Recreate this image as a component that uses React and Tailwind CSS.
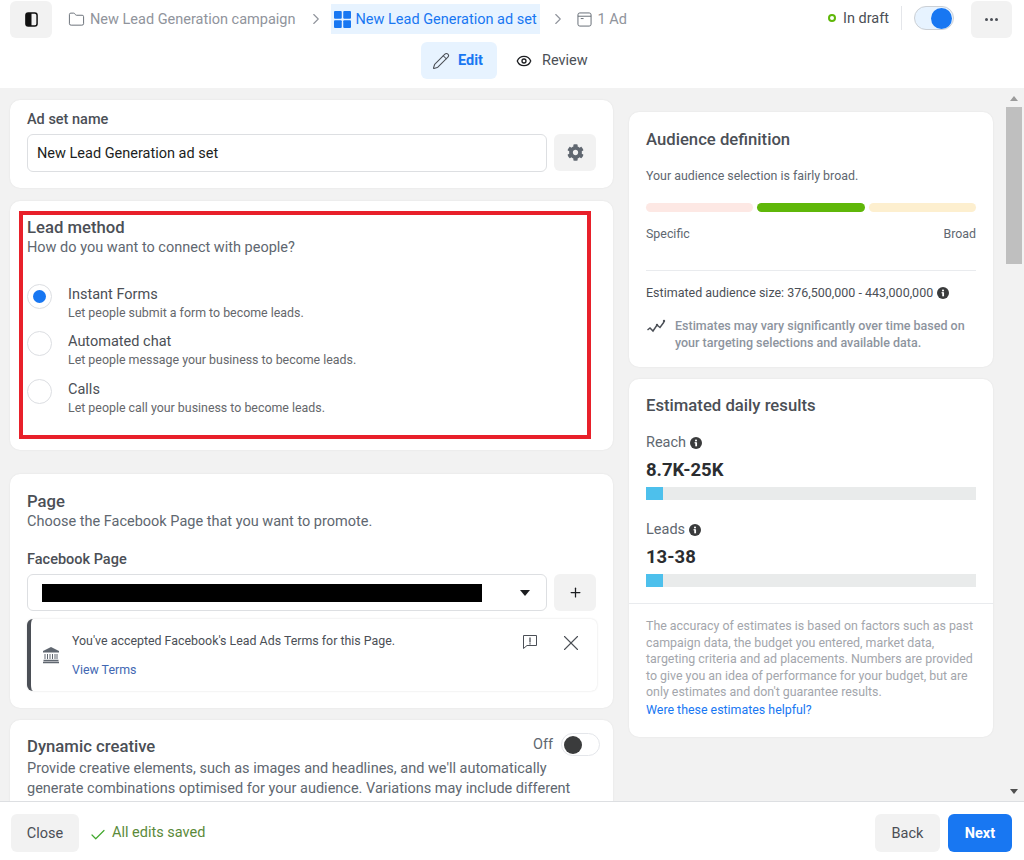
import React from "react";
import { ChevronRight, Pencil, Eye, Plus, X, Check, Folder } from "lucide-react";
import { FaCog } from "react-icons/fa";

function Info({ className = "" }) {
  return (
    <svg viewBox="0 0 16 16" className={"w-[12px] h-[12px] " + className}>
      <circle cx="8" cy="8" r="8" fill="#3a3b3c" />
      <rect x="7" y="7" width="2.4" height="5.4" fill="#fff" />
      <rect x="6" y="7" width="2" height="1.4" fill="#fff" />
      <circle cx="8" cy="4.6" r="1.4" fill="#fff" />
    </svg>
  );
}

function Card({ className = "", children }) {
  return <div className={"bg-white rounded-[10px] shadow-[0_0_2px_rgba(0,0,0,0.08)] " + className}>{children}</div>;
}

function Radio({ selected, title, desc, className = "" }) {
  return (
    <div className={"flex " + className}>
      <div className="w-[25px] h-[25px] -mt-[1px] rounded-full border border-[#dcdee2] bg-white flex items-center justify-center shrink-0">
        {selected && <div className="w-[13px] h-[13px] rounded-full bg-[#1877f2]" />}
      </div>
      <div className="ml-[16px]">
        <div className="text-[14.5px] leading-[18px] pt-[1px] text-[#4b4f56]">{title}</div>
        <div className="text-[12.4px] leading-[16px] mt-[1px] text-[#65676b]">{desc}</div>
      </div>
    </div>
  );
}

function Metric({ label, value, className = "" }) {
  return (
    <div className={className}>
      <div className="flex items-center gap-[4px] text-[14.5px] leading-[18px] text-[#606770]">
        <span className="pt-[1px]">{label}</span>
        <Info />
      </div>
      <div className="text-[18.5px] leading-[22px] font-bold text-[#2b2d30] mt-[7px]">{value}</div>
      <div className="h-[13px] bg-[#e9ebeb] mt-[6px]">
        <div className="h-full w-[17px] bg-[#4dc0ec]" />
      </div>
    </div>
  );
}

export default function App() {
  return (
    <div className="w-[1024px] h-[860px] flex flex-col bg-white overflow-hidden font-['Roboto',sans-serif]">
      <header className="h-[88px] shrink-0 bg-white pt-[1px]">
        <div className="flex items-start h-[47px]">
          <div className="ml-[10px] w-[42px] h-[37px] rounded-[6px] bg-[#f2f2f2] flex items-center justify-center">
            <svg viewBox="0 0 14 16" className="w-[13px] h-[15px]">
              <rect x="1" y="1" width="12" height="14" rx="2.5" fill="none" stroke="#111" strokeWidth="1.6" />
              <path d="M3 1h4v14H3a2 2 0 0 1-2-2V3a2 2 0 0 1 2-2z" fill="#111" />
            </svg>
          </div>
          <div className="flex items-center h-[30px] mt-[3px] ml-[16px]">
            <Folder className="w-[17px] h-[17px] text-[#606770]" strokeWidth={1.3} />
            <span className="ml-[5px] pt-[1px] text-[14.5px] text-[#90949c] whitespace-nowrap">New Lead Generation campaign</span>
            <ChevronRight className="w-[18px] h-[18px] text-[#90949c] ml-[11px]" strokeWidth={1.5} />
            <div className="ml-[6px] h-[30px] w-[209px] bg-[#e7f3ff] flex items-center pl-[3px]">
              <svg viewBox="0 0 16 16" className="w-[17px] h-[17px] shrink-0">
                <rect x="0" y="0" width="7.3" height="7.3" rx="1" fill="#1877f2" />
                <rect x="8.7" y="0" width="7.3" height="7.3" rx="1" fill="#1877f2" />
                <rect x="0" y="8.7" width="7.3" height="7.3" rx="1" fill="#1877f2" />
                <rect x="8.7" y="8.7" width="7.3" height="7.3" rx="1" fill="#1877f2" />
              </svg>
              <span className="ml-[5px] pt-[1px] text-[14.5px] text-[#1877f2] whitespace-nowrap">New Lead Generation ad set</span>
            </div>
            <ChevronRight className="w-[18px] h-[18px] text-[#90949c] ml-[9px]" strokeWidth={1.5} />
            <svg viewBox="0 0 16 16" className="w-[15px] h-[15px] ml-[10px] text-[#606770]">
              <rect x="1" y="1" width="14" height="14" rx="2" fill="none" stroke="currentColor" strokeWidth="1" />
              <path d="M1 4.5h14M4 7h3" stroke="currentColor" strokeWidth="1" fill="none" />
            </svg>
            <span className="ml-[6px] pt-[1px] text-[14.5px] text-[#90949c]">1 Ad</span>
          </div>
          <div className="ml-auto flex items-start">
            <div className="flex items-center h-[30px] mt-[2px]">
              <div className="w-[8px] h-[8px] rounded-full border-[2px] border-[#5fb709]" />
              <span className="ml-[7px] pt-[1px] text-[14.5px] text-[#4b4f56]">In draft</span>
              <div className="w-px h-[24px] bg-[#e4e6ea] ml-[12px]" />
              <div className="ml-[12px] w-[40px] h-[24px] rounded-full bg-[#e7f3ff] border border-[#ccd0d5] flex items-center justify-end pr-[1px]">
                <div className="w-[21px] h-[21px] rounded-full bg-[#1877f2]" />
              </div>
            </div>
            <div className="ml-[17px] mr-[12px] w-[41px] h-[37px] rounded-[6px] bg-[#f2f2f2] flex items-center justify-center gap-[2px]">
              <span className="w-[3px] h-[3px] rounded-full bg-[#4b4f56]" />
              <span className="w-[3px] h-[3px] rounded-full bg-[#4b4f56]" />
              <span className="w-[3px] h-[3px] rounded-full bg-[#4b4f56]" />
            </div>
          </div>
        </div>
        <div className="flex items-start pl-[421px] -mt-[6px]">
          <div className="w-[76px] h-[37px] rounded-[6px] bg-[#e7f3ff] flex items-center pl-[11px]">
            <Pencil className="w-[18px] h-[18px] text-[#4b4f56]" strokeWidth={1.4} />
            <span className="ml-[8px] pt-[1px] text-[14.5px] font-bold text-[#1877f2]">Edit</span>
          </div>
          <div className="flex items-center h-[37px] ml-[19px]">
            <Eye className="w-[16px] h-[16px] text-[#1c1e21]" strokeWidth={2} />
            <span className="ml-[10px] text-[14.5px] text-[#4b4f56]">Review</span>
          </div>
        </div>
      </header>

      <main className="flex-1 min-h-0 bg-[#f2f2f2] flex overflow-hidden relative">
        <div className="w-[603px] ml-[10px] pt-[12px] shrink-0">
          <Card className="h-[88px] px-[17px] pt-[11px]">
            <div className="text-[14.5px] leading-[18px] font-medium text-[#4b4f56]">Ad set name</div>
            <div className="flex mt-[5px] gap-[7px]">
              <div className="w-[521px] h-[38px] rounded-[6px] border border-[#dddfe2] flex items-center pl-[9px] pt-[1px] text-[14.5px] text-[#1c1e21]">
                New Lead Generation ad set
              </div>
              <div className="w-[42px] h-[37px] rounded-[6px] bg-[#f2f2f2] flex items-center justify-center">
                <FaCog className="w-[17px] h-[17px] text-[#606770]" />
              </div>
            </div>
          </Card>

          <Card className="relative h-[249px] mt-[13px] px-[17px] pt-[17px]">
            <div className="text-[16.7px] leading-[20px] font-medium text-[#4b4f56]">Lead method</div>
            <div className="text-[14.5px] leading-[18px] mt-[1px] text-[#606770]">How do you want to connect with people?</div>
            <Radio className="mt-[28px]" selected title="Instant Forms" desc="Let people submit a form to become leads." />
            <Radio className="mt-[11px]" title="Automated chat" desc="Let people message your business to become leads." />
            <Radio className="mt-[12px]" title="Calls" desc="Let people call your business to become leads." />
            <div className="absolute left-[9px] top-[10px] w-[572px] h-[228px] border-[4px] border-[#e8202a] pointer-events-none" />
          </Card>

          <Card className="h-[234px] mt-[24px] px-[17px] pt-[18px]">
            <div className="text-[16.7px] leading-[20px] font-medium text-[#4b4f56]">Page</div>
            <div className="text-[14.5px] leading-[18px] mt-[1px] text-[#606770]">Choose the Facebook Page that you want to promote.</div>
            <div className="text-[14.5px] leading-[18px] font-medium text-[#4b4f56] mt-[20px]">Facebook Page</div>
            <div className="flex mt-[5px] gap-[7px]">
              <div className="w-[521px] h-[37px] rounded-[6px] border border-[#dddfe2] flex items-center pl-[14px]">
                <div className="w-[440px] h-[18px] bg-black" />
                <div className="ml-[38px] w-0 h-0 border-l-[5px] border-r-[5px] border-t-[6px] border-l-transparent border-r-transparent border-t-[#1c1e21]" />
              </div>
              <div className="w-[42px] h-[37px] rounded-[6px] bg-[#f2f2f2] flex items-center justify-center">
                <Plus className="w-[15px] h-[15px] text-[#1c1e21]" strokeWidth={2} />
              </div>
            </div>
            <div className="mt-[8px] w-[570px] h-[72px] rounded-[6px] border-l-[4px] border-[#4b4f56] shadow-[0_0_2px_rgba(0,0,0,0.15)] flex bg-white">
              <svg viewBox="0 0 18 18" className="w-[18px] h-[18px] mt-[27px] ml-[11px] shrink-0 text-[#606770]">
                <path d="M9 1 1 5v1.5h16V5z" fill="currentColor" />
                <path d="M3 8v5M5.500 8v5M8 8v5M10.500 8v5M13 8v5M15 8v5" stroke="currentColor" strokeWidth="1" />
                <path d="M1.500 14.500h15M1 16.500h16" stroke="currentColor" strokeWidth="1.600" />
              </svg>
              <div className="ml-[12px] pt-[14px] flex-1">
                <div className="text-[12.4px] leading-[16px] text-[#4b4f56]">You've accepted Facebook's Lead Ads Terms for this Page.</div>
                <div className="text-[12.4px] leading-[16px] text-[#4267b2] mt-[13px]">View Terms</div>
              </div>
              <svg viewBox="0 0 16 16" className="w-[16px] h-[16px] mt-[15px] text-[#4b4f56]">
                <path d="M1.500 1.500h13v10H5l-3.500 3z" fill="none" stroke="currentColor" strokeWidth="1" />
                <path d="M8 3.500v5M8 9.300v1.300" stroke="currentColor" strokeWidth="1.300" />
              </svg>
              <X className="w-[26px] h-[26px] mt-[11px] ml-[20px] mr-[13px] text-[#4b4f56]" strokeWidth={1} />
            </div>
          </Card>

          <Card className="h-[200px] mt-[12px] px-[17px] pt-[17px] relative">
            <div className="text-[16.7px] leading-[20px] font-medium text-[#4b4f56]">Dynamic creative</div>
            <div className="text-[14.5px] leading-[20px] mt-[2px] text-[#606770] w-[560px]">
              Provide creative elements, such as images and headlines, and we'll automatically generate combinations optimised for your audience. Variations may include different
            </div>
            <div className="absolute right-[13px] top-[13px] flex items-center">
              <span className="text-[14.5px] text-[#606770]">Off</span>
              <div className="ml-[8px] w-[39px] h-[23px] rounded-full border border-[#e4e6ea] bg-white flex items-center pl-[2px]">
                <div className="w-[18px] h-[18px] rounded-full bg-[#3a3b3c]" />
              </div>
            </div>
          </Card>
        </div>

        <div className="w-[364px] ml-[16px] pt-[24px] shrink-0">
          <Card className="h-[255px] pt-[18px] px-[17px]">
            <div className="text-[16.7px] leading-[20px] font-medium text-[#4b4f56]">Audience definition</div>
            <div className="text-[12.4px] leading-[16px] text-[#606770] mt-[18px]">Your audience selection is fairly broad.</div>
            <div className="flex gap-[4px] mt-[19px]">
              <div className="h-[9px] w-[107px] rounded-full bg-[#fde8e4]" />
              <div className="h-[9px] w-[108px] rounded-full bg-[#5fb709]" />
              <div className="h-[9px] w-[107px] rounded-full bg-[#fdefcf]" />
            </div>
            <div className="flex justify-between mt-[14px] text-[12.4px] leading-[16px] text-[#606770]">
              <span>Specific</span>
              <span>Broad</span>
            </div>
            <div className="h-px bg-[#e9ebee] mt-[28px]" />
            <div className="flex items-center gap-[4px] mt-[14px] text-[12.5px] leading-[16px] text-[#4b4f56]">
              Estimated audience size: 376,500,000 - 443,000,000
              <Info />
            </div>
            <div className="flex mt-[16px]">
              <svg viewBox="0 0 20 14" className="w-[20px] h-[14px] mt-[2px] shrink-0 text-[#4b4f56]">
                <path d="M1.500 11 4 9l3 3 4-6 3 2.500L18 3" fill="none" stroke="currentColor" strokeWidth="1.500" />
                <circle cx="18" cy="2" r="1.200" fill="currentColor" />
                <circle cx="11" cy="6" r="1.200" fill="currentColor" />
              </svg>
              <div className="ml-[9px] text-[12.5px] leading-[17px] font-medium text-[#8d949e]">
                Estimates may vary significantly over time based on your targeting selections and available data.
              </div>
            </div>
          </Card>

          <Card className="h-[358px] mt-[12px] pt-[17px]">
            <div className="px-[17px]">
              <div className="text-[16.7px] leading-[20px] font-medium text-[#4b4f56]">Estimated daily results</div>
              <Metric className="mt-[17px]" label="Reach" value="8.7K-25K" />
              <Metric className="mt-[20px]" label="Leads" value="13-38" />
            </div>
            <div className="h-px bg-[#e9ebee] mt-[16px]" />
            <div className="px-[17px] pt-[14px] text-[12.4px] leading-[16.5px] text-[#a3a6ac]">
              The accuracy of estimates is based on factors such as past campaign data, the budget you entered, market data, targeting criteria and ad placements. Numbers are provided to give you an idea of performance for your budget, but are only estimates and don't guarantee results.
              <div className="text-[#1877f2] mt-[1px]">Were these estimates helpful?</div>
            </div>
          </Card>
        </div>

        <div className="absolute right-[2px] top-0 bottom-0 w-[16px] flex flex-col items-center">
          <div className="mt-[8px] w-0 h-0 border-l-[4px] border-r-[4px] border-b-[5px] border-l-transparent border-r-transparent border-b-[#9b9b9b]" />
          <div className="mt-[6px] w-[16px] h-[157px] bg-[#bfbfbf]" />
          <div className="mt-auto mb-[7px] w-0 h-0 border-l-[4px] border-r-[4px] border-t-[5px] border-l-transparent border-r-transparent border-t-[#505050]" />
        </div>
      </main>

      <footer className="h-[59px] shrink-0 bg-white border-t border-[#dddfe2] flex items-start pt-[12px] pl-[11px] pr-[12px]">
        <div className="w-[68px] h-[38px] pt-[1px] rounded-[6px] bg-[#f2f2f2] flex items-center justify-center text-[14.5px] text-[#4b4f56]">Close</div>
        <Check className="w-[18px] h-[18px] ml-[10px] mt-[12px] text-[#42a82e]" strokeWidth={1.6} />
        <span className="ml-[5px] mt-[10px] text-[14.5px] leading-[18px] text-[#5b8a3a]">All edits saved</span>
        <div className="ml-auto w-[65px] h-[38px] pt-[1px] rounded-[6px] bg-[#f2f2f2] flex items-center justify-center text-[14.5px] text-[#4b4f56]">Back</div>
        <div className="ml-[8px] w-[64px] h-[38px] pt-[1px] rounded-[6px] bg-[#1877f2] flex items-center justify-center text-[14.5px] font-bold text-white">Next</div>
      </footer>
    </div>
  );
}
